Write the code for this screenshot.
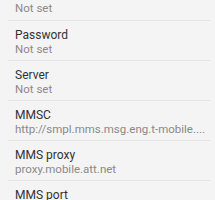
export default function App() {
  const rows = [
    { title: "Password", sub: "Not set" },
    { title: "Server", sub: "Not set" },
    { title: "MMSC", sub: "http://smpl.mms.msg.eng.t-mobile...." },
    { title: "MMS proxy", sub: "proxy.mobile.att.net" },
    { title: "MMS port", sub: "" },
  ];
  return (
    <div className="w-[215px] h-[200px] overflow-hidden bg-[#f4f4f4] font-['Roboto',sans-serif]">
      <div className="h-[20px] pl-[15px] pt-px text-[11.5px] leading-[14px] text-[#8a8a8a]">Not set</div>
      {rows.map((r) => (
        <div key={r.title}>
          <div className="ml-[8px] mr-[5px] h-px bg-[#e4e4e4]" />
          <div className="h-[39px] pl-[15px] pt-[7px]">
            <div className="text-[12px] leading-[14px] text-[#333333]">{r.title}</div>
            <div className="text-[11.5px] leading-[14px] text-[#8a8a8a] whitespace-nowrap">{r.sub}</div>
          </div>
        </div>
      ))}
    </div>
  );
}
